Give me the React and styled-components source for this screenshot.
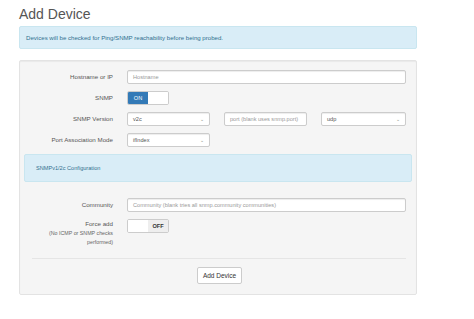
import React from "react";
import styled, { createGlobalStyle } from "styled-components";

const GlobalStyle = createGlobalStyle`
  body {
    margin: 0;
    background: #fff;
    font-family: "Liberation Sans", Arial, sans-serif;
    color: #333;
  }
`;

const Page = styled.div`
  width: 398px;
  padding: 0 0 0 19px;
`;

const Title = styled.h1`
  margin: 0 0 5px;
  padding-top: 7px;
  height: 14px;
  font-size: 14px;
  line-height: 14px;
  font-weight: 400;
  color: #555;
`;

const Alert = styled.div`
  box-sizing: border-box;
  height: 23px;
  padding: 0 6px;
  display: flex;
  align-items: center;
  background: #d9edf7;
  border: 1px solid #c9e6f0;
  border-radius: 2px;
  color: #31708f;
  font-size: 6.1px;
  margin-bottom: 11px;
`;

const Panel = styled.div`
  box-sizing: border-box;
  background: #f5f5f5;
  border: 1px solid #e3e3e3;
  border-radius: 2px;
  padding: 9px 10px 10px;
  box-shadow: inset 0 1px 1px rgba(0, 0, 0, 0.05);
`;

const Row = styled.div`
  display: flex;
  align-items: ${(p) => (p.$top ? "flex-start" : "center")};
  gap: 14px;
  margin-bottom: ${(p) => p.$mb ?? 7}px;
`;

const Label = styled.label`
  width: 83px;
  flex: none;
  text-align: right;
  font-size: 6.2px;
  color: #555;
  line-height: 10px;
`;

const Note = styled.span`
  display: block;
  font-size: 5.3px;
  line-height: 9px;
  color: #666;
`;

const Control = styled.div`
  box-sizing: border-box;
  height: 14px;
  width: ${(p) => (p.$w ? `${p.$w}px` : "auto")};
  flex: ${(p) => (p.$w ? "none" : "1")};
  min-width: 0;
  background: #fff;
  border: 1px solid #ccc;
  border-radius: 2px;
  padding: 0 5px;
  display: flex;
  align-items: center;
  justify-content: space-between;
  font-size: 5.6px;
  white-space: nowrap;
  overflow: hidden;
  color: ${(p) => (p.$ph ? "#999" : "#555")};
  box-shadow: inset 0 1px 1px rgba(0, 0, 0, 0.075);
`;

const Caret = styled.span`
  font-size: 5px;
  color: #888;
`;

const Toggle = styled.div`
  box-sizing: border-box;
  width: 42px;
  height: 14px;
  display: flex;
  border: 1px solid #ccc;
  border-radius: 2px;
  overflow: hidden;
  background: #fff;
`;

const Half = styled.div`
  width: 50%;
  display: flex;
  align-items: center;
  justify-content: center;
  font-size: 5.6px;
  background: ${(p) => (p.$on ? "#337ab7" : p.$off ? "#eee" : "#fff")};
  color: ${(p) => (p.$on ? "#fff" : "#333")};
  font-weight: ${(p) => (p.$off ? 700 : 400)};
`;

const Info = styled.div`
  box-sizing: border-box;
  height: 28px;
  margin: 0 -6px 16px -6px;
  padding: 0 11px;
  display: flex;
  align-items: center;
  background: #d9edf7;
  border: 1px solid #c9e6f0;
  border-radius: 2px;
  color: #31708f;
  font-size: 5.6px;
`;

const Divider = styled.hr`
  border: 0;
  border-top: 1px solid #e5e5e5;
  margin: 11px 0 8px 2px;
`;

const Footer = styled.div`
  display: flex;
  justify-content: center;
  padding-left: 3px;
`;

const Button = styled.button`
  box-sizing: border-box;
  height: 17px;
  width: 45px;
  padding: 0;
  font-family: inherit;
  font-size: 6.5px;
  color: #333;
  background: #fff;
  border: 1px solid #ccc;
  border-radius: 2px;
`;

export default function App() {
  return (
    <>
      <GlobalStyle />
      <Page>
        <Title>Add Device</Title>
        <Alert>Devices will be checked for Ping/SNMP reachability before being probed.</Alert>
        <Panel>
          <Row>
            <Label>Hostname or IP</Label>
            <Control $ph>Hostname</Control>
          </Row>
          <Row>
            <Label>SNMP</Label>
            <Toggle>
              <Half $on>ON</Half>
              <Half />
            </Toggle>
          </Row>
          <Row>
            <Label>SNMP Version</Label>
            <Control $w={83}>
              v2c<Caret>⌄</Caret>
            </Control>
            <Control $w={83} $ph>port (blank uses snmp.port)</Control>
            <Control>
              udp<Caret>⌄</Caret>
            </Control>
          </Row>
          <Row>
            <Label>Port Association Mode</Label>
            <Control $w={83}>
              ifIndex<Caret>⌄</Caret>
            </Control>
          </Row>
          <Info>SNMPv1/2c Configuration</Info>
          <Row>
            <Label>Community</Label>
            <Control $ph>Community (blank tries all snmp.community communities)</Control>
          </Row>
          <Row $top $mb={0}>
            <Label>
              Force add
              <Note>(No ICMP or SNMP checks performed)</Note>
            </Label>
            <Toggle>
              <Half />
              <Half $off>OFF</Half>
            </Toggle>
          </Row>
          <Divider />
          <Footer>
            <Button>Add Device</Button>
          </Footer>
        </Panel>
      </Page>
    </>
  );
}
